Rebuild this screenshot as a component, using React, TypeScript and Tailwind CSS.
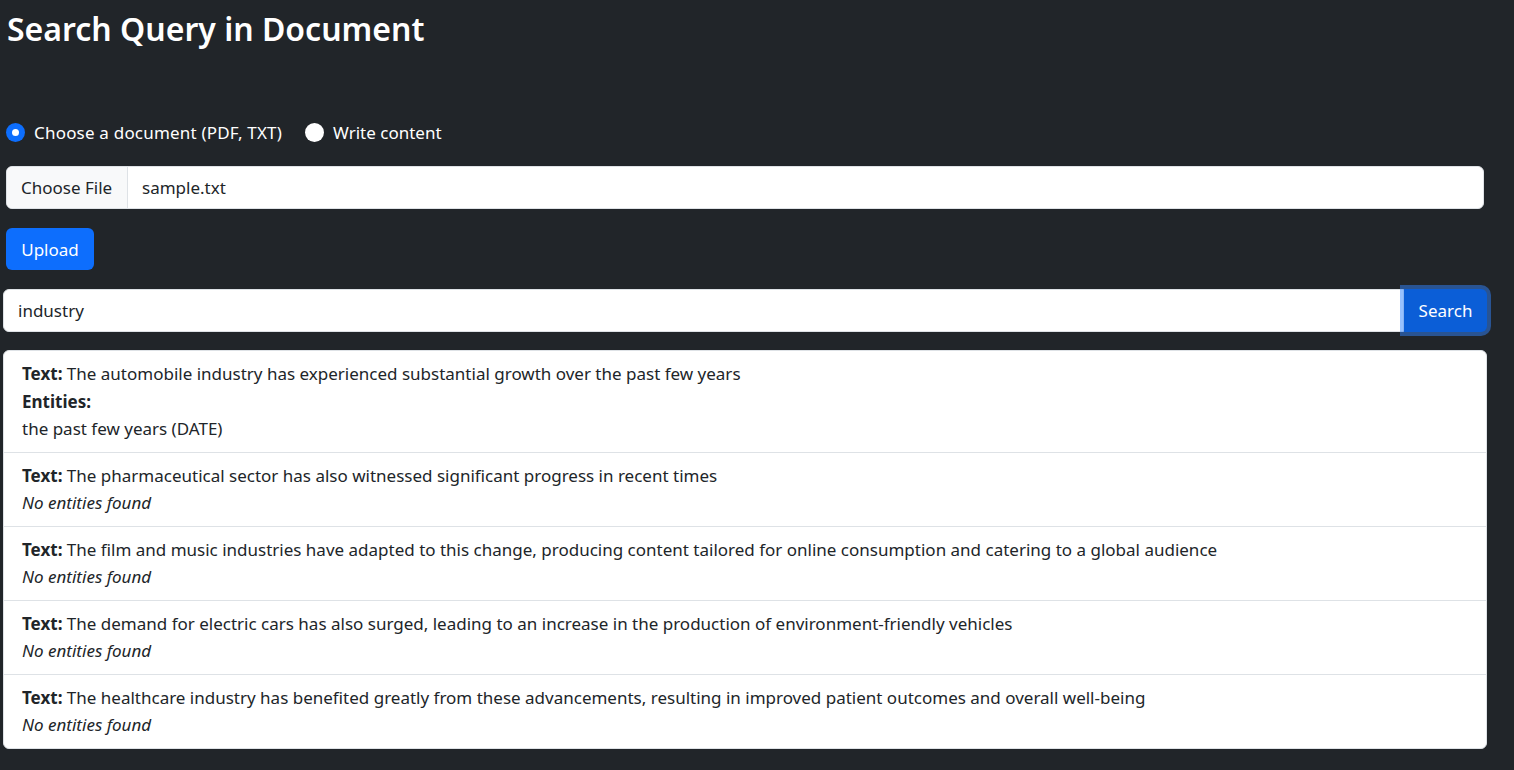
import React from "react";

const results = [
  {
    text: "The automobile industry has experienced substantial growth over the past few years",
    entities: ["the past few years (DATE)"],
  },
  {
    text: "The pharmaceutical sector has also witnessed significant progress in recent times",
    entities: [],
  },
  {
    text: "The film and music industries have adapted to this change, producing content tailored for online consumption and catering to a global audience",
    entities: [],
  },
  {
    text: "The demand for electric cars has also surged, leading to an increase in the production of environment-friendly vehicles",
    entities: [],
  },
  {
    text: "The healthcare industry has benefited greatly from these advancements, resulting in improved patient outcomes and overall well-being",
    entities: [],
  },
];

export default function App() {
  return (
    <div
      className="min-h-screen bg-[#212529] text-white text-[17px] leading-[27px]"
      style={{ fontFamily: '"Noto Sans", "Open Sans", sans-serif' }}
    >
      <div className="pr-[27px]">
        <h1 className="pl-[7px] pt-[8px] text-[32px] leading-[42px] font-semibold">
          Search Query in Document
        </h1>

        <div className="mt-[68px] flex items-center h-[28px] pl-[6px]">
          <label className="flex items-center">
            <span className="w-[19px] h-[19px] rounded-full bg-[#0d6efd] flex items-center justify-center">
              <span className="w-[7px] h-[7px] rounded-full bg-white" />
            </span>
            <span className="ml-[9px] tracking-[0.2px]">Choose a document (PDF, TXT)</span>
          </label>
          <label className="flex items-center ml-[23px]">
            <span className="w-[19px] h-[19px] rounded-full bg-white" />
            <span className="ml-[9px]">Write content</span>
          </label>
        </div>

        <div className="mt-[20px] ml-[6px] mr-[3px] h-[43px] flex bg-white border border-[#dee2e6] rounded-[6px] overflow-hidden text-[#212529]">
          <div className="w-[121px] bg-[#f8f9fa] border-r border-[#dee2e6] flex items-center pl-[14px]">
            Choose File
          </div>
          <div className="flex items-center pl-[14px]">sample.txt</div>
        </div>

        <button className="mt-[19px] ml-[6px] h-[42px] w-[88px] bg-[#0d6efd] rounded-[6px] text-white">
          Upload
        </button>

        <div className="mt-[19px] ml-[3px] flex h-[43px]">
          <div className="flex-1 bg-white border border-[#dee2e6] rounded-l-[6px] flex items-center pl-[14px] text-[#212529]">
            industry
          </div>
          <button className="w-[83px] bg-[#0b5ed7] rounded-r-[6px] text-white shadow-[0_0_0_4px_rgba(49,132,253,0.5)]">
            Search
          </button>
        </div>

        <div className="mt-[18px] ml-[3px] bg-white border border-[#dee2e6] rounded-[6px] text-[#212529] leading-[27.5px]">
          {results.map((r, i) => (
            <div
              key={i}
              className={`px-[18px] py-[9px] ${i > 0 ? "border-t border-[#dee2e6]" : ""}`}
            >
              <div>
                <strong className="font-bold">Text:</strong> {r.text}
              </div>
              {r.entities.length > 0 ? (
                <>
                  <div className="font-bold">Entities:</div>
                  {r.entities.map((e) => (
                    <div key={e}>{e}</div>
                  ))}
                </>
              ) : (
                <div className="italic">No entities found</div>
              )}
            </div>
          ))}
        </div>
      </div>
    </div>
  );
}
